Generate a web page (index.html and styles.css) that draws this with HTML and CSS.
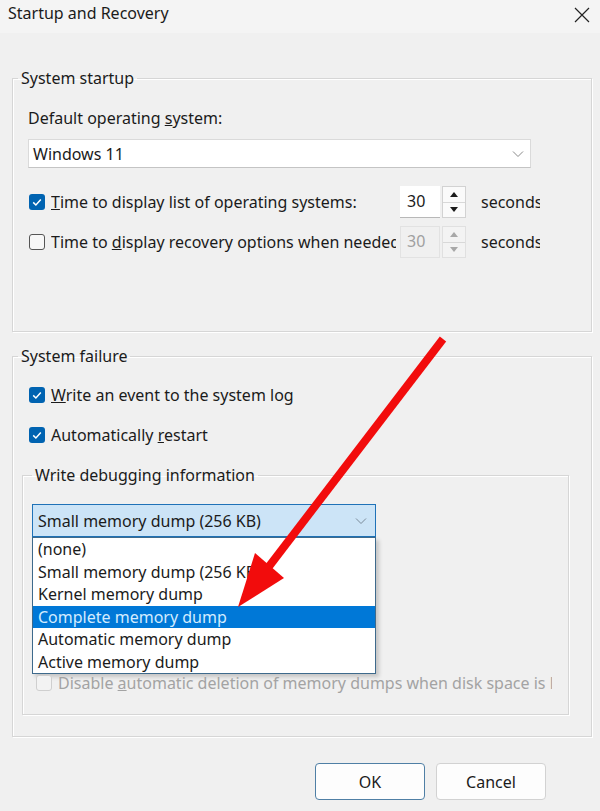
FILE: index.html
```html
<!DOCTYPE html>
<html>
<head>
<meta charset="utf-8">
<link rel="stylesheet" href="styles.css">
</head>
<body>
<div class="window">
  <div class="titlebar">
    <span class="title">Startup and Recovery</span>
    <svg class="close" width="16" height="16" viewBox="0 0 16 16"><path d="M1 1 L15 15 M15 1 L1 15" stroke="#222" stroke-width="1.2" fill="none"/></svg>
  </div>
  <div class="content">
    <fieldset class="group startup">
      <legend>System startup</legend>
      <div class="field-label">Default operating <u>s</u>ystem:</div>
      <div class="select">
        <span>Windows 11</span>
        <svg class="chev" width="12" height="8" viewBox="0 0 12 8"><path d="M1 1.5 L6 6.5 L11 1.5" stroke="#8a8a8a" stroke-width="1" fill="none"/></svg>
      </div>
      <div class="row spin-row first">
        <span class="check on"><svg width="16" height="16" viewBox="0 0 16 16"><path d="M4.2 8.4 L6.9 11 L11.8 5.6" stroke="#fff" stroke-width="1.5" fill="none"/></svg></span>
        <span class="label"><u>T</u>ime to display list of operating systems:</span>
        <div class="spin">
          <span class="spin-input">30</span>
          <span class="spin-btns">
            <span class="sb"><svg width="8" height="5" viewBox="0 0 8 5"><path d="M0 5 L4 0 L8 5Z" fill="#1a1a1a"/></svg></span>
            <span class="sb"><svg width="8" height="5" viewBox="0 0 8 5"><path d="M0 0 L4 5 L8 0Z" fill="#1a1a1a"/></svg></span>
          </span>
        </div>
        <span class="unit">seconds</span>
      </div>
      <div class="row spin-row">
        <span class="check off"></span>
        <span class="label">Time to <u>d</u>isplay recovery options when needed</span>
        <div class="spin disabled">
          <span class="spin-input">30</span>
          <span class="spin-btns">
            <span class="sb"><svg width="8" height="5" viewBox="0 0 8 5"><path d="M0 5 L4 0 L8 5Z" fill="#a8a8a8"/></svg></span>
            <span class="sb"><svg width="8" height="5" viewBox="0 0 8 5"><path d="M0 0 L4 5 L8 0Z" fill="#a8a8a8"/></svg></span>
          </span>
        </div>
        <span class="unit">seconds</span>
      </div>
    </fieldset>

    <fieldset class="group failure">
      <legend>System failure</legend>
      <div class="row check-row first">
        <span class="check on"><svg width="16" height="16" viewBox="0 0 16 16"><path d="M4.2 8.4 L6.9 11 L11.8 5.6" stroke="#fff" stroke-width="1.5" fill="none"/></svg></span>
        <span><u>W</u>rite an event to the system log</span>
      </div>
      <div class="row check-row">
        <span class="check on"><svg width="16" height="16" viewBox="0 0 16 16"><path d="M4.2 8.4 L6.9 11 L11.8 5.6" stroke="#fff" stroke-width="1.5" fill="none"/></svg></span>
        <span>Automatically <u>r</u>estart</span>
      </div>
      <fieldset class="group debug">
        <legend>Write debugging information</legend>
        <div class="combo">
          <span>Small memory dump (256 KB)</span>
          <svg class="chev" width="12" height="8" viewBox="0 0 12 8"><path d="M1 1.5 L6 6.5 L11 1.5" stroke="#7a8a99" stroke-width="1" fill="none"/></svg>
        </div>
        <ul class="list">
          <li>(none)</li>
          <li>Small memory dump (256 KB)</li>
          <li>Kernel memory dump</li>
          <li class="sel">Complete memory dump</li>
          <li>Automatic memory dump</li>
          <li>Active memory dump</li>
        </ul>
        <div class="row disabled-row">
          <span class="check dis"></span>
          <span class="dis-label">Disable <u>a</u>utomatic deletion of memory dumps when disk space is low</span>
        </div>
      </fieldset>
    </fieldset>

    <div class="buttons">
      <button class="btn default">OK</button>
      <button class="btn">Cancel</button>
    </div>
  </div>

  <svg class="annotation" width="600" height="811" viewBox="0 0 600 811">
    <line x1="443" y1="339" x2="264" y2="573" stroke="#f20c0c" stroke-width="8"/>
    <polygon points="238,607 255,553 284,578" fill="#f20c0c"/>
  </svg>
</div>
</body>
</html>
```

FILE: styles.css
```css
html, body {
  margin: 0;
  padding: 0;
}
body {
  background: #f0f0f0;
  font-family: "Noto Sans", "Open Sans", sans-serif;
  font-size: 16px;
  color: #1b1b1b;
}
.window {
  position: relative;
  width: 600px;
  height: 811px;
  overflow: hidden;
  background: #f0f0f0;
}
.titlebar {
  height: 33px;
  box-sizing: border-box;
  background: #f4f4f4;
  display: flex;
  justify-content: space-between;
  align-items: flex-start;
  padding: 2px 0 0 8px;
}
.title {
  font-size: 16px;
  line-height: 22px;
}
.close {
  margin: 5px 10px 0 0;
}
.content {
  padding-top: 34px;
}
fieldset.group {
  margin: 0 8px 0 12px;
  border: 1px solid #d6d6d6;
  box-shadow: inset 1px 1px 0 #ffffff, 1px 1px 0 #ffffff;
  min-width: 0;
}
legend {
  padding: 0 3px;
  line-height: 22px;
  font-size: 16px;
}
fieldset.startup {
  padding: 18px 50px 73px 15px;
}
.startup legend {
  margin-left: -10px;
}
.field-label {
  line-height: 22px;
}
.select {
  width: 503px;
  margin-top: 10px;
  height: 29px;
  box-sizing: border-box;
  background: #ffffff;
  border: 1px solid #dadada;
  border-bottom-color: #c4c4c4;
  display: flex;
  align-items: center;
  justify-content: space-between;
  padding: 0 6px 0 4px;
}
.row {
  display: flex;
  align-items: center;
}
.check {
  width: 16px;
  height: 16px;
  box-sizing: border-box;
  border-radius: 3px;
  flex: none;
  margin-right: 6px;
  display: flex;
}
.check.on {
  background: #0063b1;
}
.check.off {
  border: 1px solid #555;
  background: #f7f7f7;
}
.check.dis {
  border: 1px solid #cfcfcf;
  background: #f3f3f3;
}
.spin-row {
  height: 32px;
  margin-top: 8px;
  padding-left: 1px;
}
.spin-row.first {
  margin-top: 18px;
}
.label {
  width: 345px;
  flex: none;
  white-space: nowrap;
  overflow: hidden;
}
.spin {
  display: flex;
  height: 32px;
  margin-left: 4px;
}
.spin-input {
  width: 40px;
  box-sizing: border-box;
  background: #ffffff;
  border-bottom: 1px solid #b8b8b8;
  padding-left: 7px;
  line-height: 31px;
}
.spin-btns {
  width: 24px;
  margin-left: 2px;
  box-sizing: border-box;
  border: 1px solid #d2d2d2;
  background: #fafafa;
  display: flex;
  flex-direction: column;
}
.sb {
  flex: 1;
  display: flex;
  align-items: center;
  justify-content: center;
}
.sb + .sb {
  border-top: 1px solid #d8d8d8;
}
.spin.disabled .spin-input {
  background: #f0f0f0;
  border: 1px solid #e2e2e2;
  color: #a0a0a0;
  padding-left: 6px;
  line-height: 29px;
}
.spin.disabled .spin-btns {
  border-color: #e0e0e0;
  background: #f3f3f3;
}
.unit {
  margin-left: 15px;
  width: 59px;
  flex: none;
  overflow: hidden;
  white-space: nowrap;
}
fieldset.failure {
  margin-top: 13px;
  padding: 17px 22px 21px 9px;
}
.failure > legend {
  margin-left: -4px;
}
.check-row {
  height: 22px;
  margin-top: 18px;
  padding-left: 7px;
}
.check-row.first {
  margin-top: 0;
}
fieldset.debug {
  margin: 18px 0 0 0;
  padding: 18px 0 22px 9px;
}
.debug legend {
  margin-left: 0;
}
.combo {
  width: 344px;
  height: 33px;
  box-sizing: border-box;
  background: #cce4f7;
  border: 1px solid #1f72b8;
  display: flex;
  align-items: center;
  justify-content: space-between;
  padding: 0 8px 0 5px;
}
.list {
  list-style: none;
  margin: 0;
  padding: 0;
  width: 344px;
  box-sizing: border-box;
  background: #ffffff;
  border: 1px solid #3e6a8c;
  box-shadow: 3px 3px 4px rgba(0, 0, 0, 0.18);
}
.list li {
  height: 22.5px;
  line-height: 22.5px;
  padding-left: 5px;
  white-space: nowrap;
  overflow: hidden;
}
.list li.sel {
  background: #0078d7;
  color: #d3ecff;
}
.disabled-row {
  height: 18px;
  padding-left: 4px;
  color: #a3a3a3;
}
.dis-label {
  width: 494px;
  white-space: nowrap;
  overflow: hidden;
}
.buttons {
  display: flex;
  justify-content: flex-end;
  gap: 11px;
  margin: 26px 54px 0 0;
}
.btn {
  width: 110px;
  height: 37px;
  box-sizing: border-box;
  font-family: "Noto Sans", "Open Sans", sans-serif;
  font-size: 16px;
  color: #1b1b1b;
  background: #fdfdfd;
  border: 1px solid #d2d2d2;
  border-radius: 4px;
}
.btn.default {
  border: 1px solid #4f7fa5;
}
.annotation {
  position: absolute;
  top: 0;
  left: 0;
  pointer-events: none;
}
```
